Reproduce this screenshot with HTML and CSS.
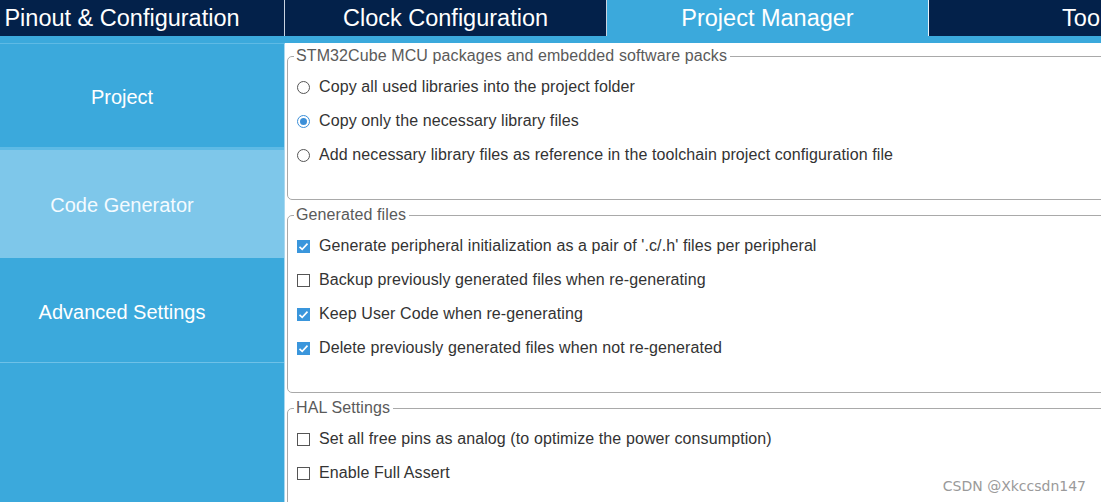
FILE: index.html
```html
<!DOCTYPE html>
<html>
<head>
<meta charset="utf-8">
<link rel="stylesheet" href="styles.css">
</head>
<body>
<div class="app">
  <nav class="tabs">
    <div class="tab tab-first">Pinout &amp; Configuration</div>
    <div class="tab">Clock Configuration</div>
    <div class="tab active">Project Manager</div>
    <div class="tab">Tools</div>
  </nav>
  <div class="strip"></div>
  <div class="main">
    <aside class="side">
      <div class="side-item sep-thick">Project</div>
      <div class="side-item active">Code Generator</div>
      <div class="side-item sep-thin">Advanced Settings</div>
    </aside>
    <section class="content">
      <fieldset class="group">
        <legend>STM32Cube MCU packages and embedded software packs</legend>
        <div class="row"><span class="radio"></span>Copy all used libraries into the project folder</div>
        <div class="row"><span class="radio on"></span>Copy only the necessary library files</div>
        <div class="row"><span class="radio"></span>Add necessary library files as reference in the toolchain project configuration file</div>
      </fieldset>
      <fieldset class="group">
        <legend>Generated files</legend>
        <div class="row"><span class="check on"><svg viewBox="0 0 13 13" width="13" height="13"><path d="M2.5 6.8 L5.2 9.4 L10.5 3.6" fill="none" stroke="#fff" stroke-width="1.6"/></svg></span>Generate peripheral initialization as a pair of '.c/.h' files per peripheral</div>
        <div class="row"><span class="check"></span>Backup previously generated files when re-generating</div>
        <div class="row"><span class="check on"><svg viewBox="0 0 13 13" width="13" height="13"><path d="M2.5 6.8 L5.2 9.4 L10.5 3.6" fill="none" stroke="#fff" stroke-width="1.6"/></svg></span>Keep User Code when re-generating</div>
        <div class="row"><span class="check on"><svg viewBox="0 0 13 13" width="13" height="13"><path d="M2.5 6.8 L5.2 9.4 L10.5 3.6" fill="none" stroke="#fff" stroke-width="1.6"/></svg></span>Delete previously generated files when not re-generated</div>
      </fieldset>
      <fieldset class="group">
        <legend>HAL Settings</legend>
        <div class="row"><span class="check"></span>Set all free pins as analog (to optimize the power consumption)</div>
        <div class="row"><span class="check"></span>Enable Full Assert</div>
      </fieldset>
    </section>
  </div>
  <div class="watermark">CSDN @Xkccsdn147</div>
</div>
</body>
</html>
```
FILE: styles.css
```css
* { box-sizing: border-box; }
html, body { margin: 0; padding: 0; }
body {
  width: 1101px;
  height: 502px;
  overflow: hidden;
  background: #fff;
  font-family: "Liberation Sans", Arial, sans-serif;
}
.app { position: relative; width: 1101px; height: 502px; overflow: hidden; display: flex; flex-direction: column; }
.tabs {
  display: flex;
  height: 36px;
  background: #03214a;
  flex: 0 0 36px;
}
.tab {
  flex: 0 0 322px;
  height: 36px;
  line-height: 37px;
  text-align: center;
  color: #fff;
  font-size: 23.5px;
  border-right: 1px solid #c9d3e0;
  white-space: nowrap;
  overflow: hidden;
}
.tab-first { flex: 0 0 285px; padding-right: 40px; overflow: visible; }
.tab.active { background: #3ba9dc; border-right-color: #e8f2fa; }
.strip { flex: 0 0 7px; background: #3ba9dc; }
.main { flex: 1; display: flex; min-height: 0; }
.side {
  flex: 0 0 285px;
  background: #3ba9dc;
  border-right: 1px solid #a9d8f0;
  border-top: 1px solid #5ebae5;
  display: flex;
  flex-direction: column;
}
.side-item {
  color: #fff;
  font-size: 20px;
  text-align: center;
  padding: 3px 40px 0 0;
  display: flex;
  align-items: center;
  justify-content: center;
  height: 104px;
}
.side-item.sep-thick { height: 106px; border-bottom: 3px solid #5ebae5; }
.side-item.active { background: #7ec7ea; height: 108px; color: #f4fbff; }
.side-item.sep-thin { height: 105px; border-bottom: 1px solid #6ec1e8; padding-top: 5px; }
.content {
  flex: 1;
  overflow: hidden;
  padding: 4px 0 0 2px;
  display: flex;
  flex-direction: column;
  gap: 6px;
}
.group {
  margin: 0;
  width: calc(100% + 20px);
  border: 1px solid #a9a9a9;
  border-radius: 5px;
  padding: 5px 8px 27px 9px;
  min-width: 0;
}
.group legend {
  font-size: 16px;
  letter-spacing: 0.1px;
  line-height: 18px;
  color: #5a5a5a;
  padding: 0 3px 0 2px;
  margin-left: -3px;
}
.row {
  height: 34px;
  display: flex;
  align-items: center;
  gap: 9px;
  font-size: 16px;
  letter-spacing: 0.1px;
  color: #333;
  white-space: nowrap;
}
.radio {
  width: 13px;
  height: 13px;
  border: 1px solid #555;
  border-radius: 50%;
  background: #fff;
  flex: 0 0 13px;
  display: flex;
  align-items: center;
  justify-content: center;
}
.radio.on { border-color: #3c8fd8; }
.radio.on::after {
  content: "";
  width: 7px;
  height: 7px;
  border-radius: 50%;
  background: #3c8fd8;
}
.check {
  width: 13px;
  height: 13px;
  border: 1px solid #555;
  background: #fff;
  flex: 0 0 13px;
  display: block;
}
.check.on { background: #3a96dc; border-color: #3a96dc; }
.check svg { display: block; margin: -1px; }
.watermark {
  position: absolute;
  right: 15px;
  bottom: 8px;
  font-size: 14px;
  color: #9a9a9a;
  font-family: "DejaVu Sans", sans-serif;
}
```
